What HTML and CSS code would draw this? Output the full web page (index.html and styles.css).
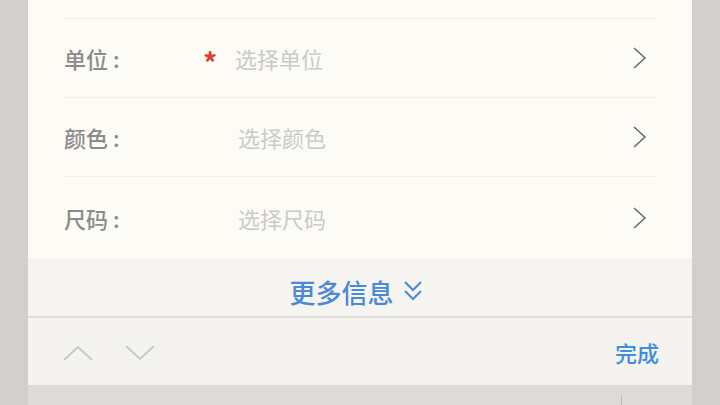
FILE: index.html
```html
<!DOCTYPE html>
<html lang="zh-CN">

<head>
    <meta charset="UTF-8">
    <meta name="viewport" content="width=device-width, initial-scale=1.0">
    <title>选择规格</title>
    <link rel="stylesheet" href="styles.css">
</head>

<body>
    <div class="screen">
        <div class="panel">

            <div class="form">
                <div class="row-top"></div>

                <div class="row">
                    <span class="label">单位<span class="colon">:</span></span>
                    <span class="star">*</span>
                    <span class="ph">选择单位</span>
                    <svg class="arrow" width="16" height="24" viewBox="0 0 16 24">
                        <path d="M2 2 L13 12 L2 22" />
                    </svg>
                </div>

                <div class="row">
                    <span class="label">颜色<span class="colon">:</span></span>
                    <span class="star"></span>
                    <span class="ph plain">选择颜色</span>
                    <svg class="arrow" width="16" height="24" viewBox="0 0 16 24">
                        <path d="M2 2 L13 12 L2 22" />
                    </svg>
                </div>

                <div class="row last">
                    <span class="label">尺码<span class="colon">:</span></span>
                    <span class="star"></span>
                    <span class="ph plain">选择尺码</span>
                    <svg class="arrow" width="16" height="24" viewBox="0 0 16 24">
                        <path d="M2 2 L13 12 L2 22" />
                    </svg>
                </div>
            </div>

            <!-- expand link -->
            <div class="more">
                <span>更多信息</span>
                <svg class="more-icon" width="20" height="22" viewBox="0 0 20 22">
                    <path d="M2 2 L10 10 L18 2" />
                    <path d="M2 11 L10 19 L18 11" />
                </svg>
            </div>

            <!-- keyboard toolbar -->
            <div class="toolbar">
                <div class="nav-btns">
                    <svg class="nav" width="30" height="16" viewBox="0 0 30 16">
                        <path d="M1 15 L15 2 L29 15" />
                    </svg>
                    <svg class="nav" width="30" height="16" viewBox="0 0 30 16">
                        <path d="M1 1 L15 14 L29 1" />
                    </svg>
                </div>
                <span class="done">完成</span>
            </div>

            <div class="keys">
                <span class="key-line"></span>
            </div>

        </div>
    </div>
</body>

</html>
```

FILE: styles.css
```css
body {
    margin: 0;
    padding: 0;
    font-family: "Noto Sans CJK SC", "Noto Sans", sans-serif;
    background-color: #d1d0cc;
}

.screen {
    width: 720px;
    height: 405px;
    overflow: hidden;
    padding: 0 28px;
    box-sizing: border-box;
    background-color: #d1d0cc;
}

.panel {
    background-color: #fdfbf6;
    height: 405px;
}

.form {
    padding: 0 36px;
    background-color: #fdfbf6;
}

.row-top {
    height: 18px;
    border-bottom: 1px solid #f1efe9;
}

.row {
    display: flex;
    align-items: center;
    height: 78px;
    border-bottom: 1px solid #f1efe9;
}

.row.last {
    height: 81px;
    border-bottom: none;
}

.label {
    width: 139px;
    font-size: 22px;
    font-weight: 500;
    color: #8b8b8b;
}

.colon {
    margin-left: 5px;
}

.star {
    width: 32px;
    font-size: 28px;
    font-weight: 700;
    color: #d8412f;
    line-height: 1;
    padding-top: 8px;
}

.ph {
    flex: 1;
    font-size: 22px;
    color: #cacaca;
}

.ph.plain {
    padding-left: 3px;
}

.arrow {
    margin-right: 8px;
}

.arrow path {
    fill: none;
    stroke: #6b6b6b;
    stroke-width: 1.6;
}

.more {
    height: 50px;
    padding: 8px 8px 0 0;
    background-color: #f5f4f0;
    border-bottom: 2px solid #dedcd7;
    display: flex;
    align-items: center;
    justify-content: center;
    gap: 9px;
    font-size: 26px;
    font-weight: 500;
    color: #4a88d8;
}

.more-icon path {
    fill: none;
    stroke: #4a88d8;
    stroke-width: 2;
}

.toolbar {
    height: 67px;
    background-color: #f4f3ef;
    display: flex;
    align-items: center;
    justify-content: space-between;
    padding: 0 33px 0 35px;
}

.nav-btns {
    display: flex;
    gap: 32px;
    padding-top: 2px;
}

.nav path {
    fill: none;
    stroke: #c8c8c5;
    stroke-width: 2;
}

.done {
    font-size: 22px;
    font-weight: 500;
    color: #3d8ede;
}

.keys {
    height: 20px;
    background-color: #dcdbd8;
    position: relative;
}

.key-line {
    position: absolute;
    left: 593px;
    top: 10px;
    width: 1px;
    height: 10px;
    background-color: #bdbcb8;
}
```
